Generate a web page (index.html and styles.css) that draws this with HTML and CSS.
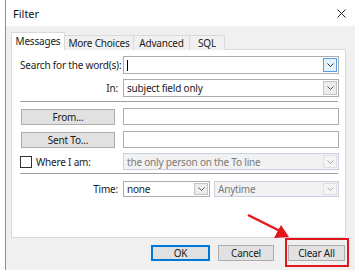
FILE: index.html
```html
<!DOCTYPE html>
<html>
<head>
<meta charset="utf-8">
<link rel="stylesheet" href="styles.css">
</head>
<body>
<div class="window">
  <div class="titlebar">
    <span class="title">Filter</span>
    <svg class="close" width="9" height="9" viewBox="0 0 9 9"><path d="M0.5 0.5 L8.5 8.5 M8.5 0.5 L0.5 8.5" stroke="#222" stroke-width="1"/></svg>
  </div>
  <div class="client">
    <div class="tabs">
      <div class="tab active t1">Messages</div>
      <div class="tab t2">More Choices</div>
      <div class="tab t3">Advanced</div>
      <div class="tab t4">SQL</div>
    </div>
    <div class="panel">
      <div class="row r1">
        <label class="lbl left">Search for the word(s):</label>
        <div class="field combo">
          <span class="caret"></span>
          <span class="arrow focus"><svg width="7" height="4" viewBox="0 0 7 4"><path d="M0.5 0.5 L3.5 3.5 L6.5 0.5" fill="none" stroke="#333" stroke-width="1"/></svg></span>
        </div>
      </div>
      <div class="row r2">
        <label class="lbl">In:</label>
        <div class="field combo">
          <span class="val">subject field only</span>
          <span class="arrow"><svg width="7" height="4" viewBox="0 0 7 4"><path d="M0.5 0.5 L3.5 3.5 L6.5 0.5" fill="none" stroke="#555" stroke-width="1"/></svg></span>
        </div>
      </div>
      <div class="sep s1"></div>
      <div class="row r3">
        <div class="lblcell"><button class="btn wide">From...</button></div>
        <div class="field"></div>
      </div>
      <div class="row r4">
        <div class="lblcell"><button class="btn wide">Sent To...</button></div>
        <div class="field"></div>
      </div>
      <div class="row r5">
        <div class="lblcell check"><span class="box"></span><span>Where I am:</span></div>
        <div class="field combo disabled">
          <span class="val">the only person on the To line</span>
          <span class="arrow dis"><svg width="7" height="4" viewBox="0 0 7 4"><path d="M0.5 0.5 L3.5 3.5 L6.5 0.5" fill="none" stroke="#aaa" stroke-width="1"/></svg></span>
        </div>
      </div>
      <div class="sep s2"></div>
      <div class="row r6">
        <label class="lbl">Time:</label>
        <div class="timepair">
          <div class="field combo time">
            <span class="val">none</span>
            <span class="arrow"><svg width="7" height="4" viewBox="0 0 7 4"><path d="M0.5 0.5 L3.5 3.5 L6.5 0.5" fill="none" stroke="#555" stroke-width="1"/></svg></span>
          </div>
          <div class="field combo disabled any">
            <span class="val">Anytime</span>
            <span class="arrow dis"><svg width="7" height="4" viewBox="0 0 7 4"><path d="M0.5 0.5 L3.5 3.5 L6.5 0.5" fill="none" stroke="#aaa" stroke-width="1"/></svg></span>
          </div>
        </div>
      </div>
    </div>
    <div class="buttons">
      <button class="btn ok">OK</button>
      <button class="btn cancel">Cancel</button>
      <button class="btn clear">Clear All</button>
    </div>
  </div>
  <svg class="annot-arrow" width="60" height="40" viewBox="0 0 60 40">
    <path d="M6 4 L38 20" stroke="#e3161e" stroke-width="2.4" fill="none"/>
    <path d="M47 26 L32 27 L39 14 Z" fill="#e3161e"/>
  </svg>
  <div class="annot-box"></div>
</div>
</body>
</html>
```

FILE: styles.css
```css
* { box-sizing: border-box; }
html, body { margin: 0; padding: 0; background: #fff; }
body {
  width: 355px;
  height: 270px;
  overflow: hidden;
  font-family: "Noto Sans", "Open Sans", sans-serif;
  font-size: 10px;
  letter-spacing: -0.2px;
  color: #1b1b1b;
}
.window {
  position: relative;
  margin-left: 5px;
  width: 350px;
  height: 270px;
  border-left: 1px solid #8f8f8f;
  display: flex;
  flex-direction: column;
}
.titlebar {
  height: 26px;
  background: #fff;
  display: flex;
  align-items: center;
  padding-left: 7px;
  padding-right: 9px;
}
.title { font-size: 11px; color: #111; letter-spacing: 0; }
.close { margin-left: auto; }
.client {
  flex: 1;
  background: #f0f0f0;
  padding: 6px 9px 0 5px;
}
.tabs {
  display: flex;
  align-items: flex-end;
  height: 18px;
  margin-bottom: -1px;
  position: relative;
  z-index: 1;
}
.tab {
  height: 15px;
  border: 1px solid #d9d9d9;
  border-bottom: none;
  background: #f0f0f0;
  display: flex;
  align-items: center;
  justify-content: center;
  margin-left: -1px;
  line-height: 1;
}
.tab.active {
  height: 18px;
  background: #fff;
  margin-left: 0;
  padding-bottom: 2px;
}
.t1 { width: 54px; }
.t2 { width: 70px; }
.t3 { width: 57px; }
.t4 { width: 36px; }
.panel {
  height: 189px;
  background: #fff;
  border: 1px solid #d9d9d9;
  padding: 6px 6px 0 8px;
  display: flex;
  flex-direction: column;
}
.row {
  display: grid;
  grid-template-columns: 98px 216px;
  column-gap: 5px;
  align-items: center;
}
.lbl { text-align: right; white-space: nowrap; }
.lbl.left { text-align: left; }
.field {
  height: 17px;
  border: 1px solid #acacac;
  background: #fff;
  position: relative;
  display: flex;
  align-items: center;
  padding-left: 3px;
}
.combo .arrow {
  position: absolute;
  right: 1px;
  top: 1px;
  bottom: 1px;
  width: 14px;
  border: 1px solid #c4c4c4;
  background: #ececec;
  display: flex;
  align-items: center;
  justify-content: center;
}
.combo .arrow.focus { border-color: #569de5; background: #e5f1fb; }
.combo .arrow.dis { background: #f4f4f4; border-color: #e0e0e0; }
.caret { width: 1px; height: 11px; background: #000; }
.val { white-space: nowrap; }
.r1 .field { height: 18px; }
.r2 { margin-top: 5px; }
.r2 .field { height: 18px; }
.sep {
  height: 2px;
  border-top: 1px solid #a0a0a0;
  border-bottom: 1px solid #fff;
  margin-right: 1px;
}
.s1 { margin-top: 4px; }
.r3 { margin-top: 5px; }
.r4 { margin-top: 6px; }
.r5 { margin-top: 5px; }
.s2 { margin-top: 3px; }
.r6 { margin-top: 6px; }
.r6 .field { height: 16px; }
.lblcell { display: flex; align-items: center; }
.btn {
  font: inherit;
  letter-spacing: -0.2px;
  color: #1b1b1b;
  background: #e1e1e1;
  border: 1px solid #adadad;
  padding: 0;
  height: 16px;
  line-height: 1;
}
.btn.wide { width: 94px; margin-left: 1px; }
.check { gap: 4px; }
.box {
  width: 12px;
  height: 12px;
  border: 1px solid #333;
  background: #fff;
}
.field.disabled {
  background: #f2f2f2;
  border-color: #c7d3e0;
  color: #7a7a7a;
}
.timepair {
  display: flex;
  gap: 4px;
}
.time { width: 87px; }
.any { flex: 1; }
.buttons {
  display: flex;
  justify-content: flex-end;
  margin-top: 7px;
  padding-right: 1px;
}
.btn.ok { width: 59px; border: 2px solid #0078d7; }
.btn.cancel { width: 56px; margin-left: 8px; }
.btn.clear { width: 57px; margin-left: 14px; }
.annot-box {
  position: absolute;
  left: 279px;
  top: 238px;
  width: 64px;
  height: 29px;
  border: 2px solid #e3161e;
}
.annot-arrow {
  position: absolute;
  left: 236px;
  top: 211px;
}
```
